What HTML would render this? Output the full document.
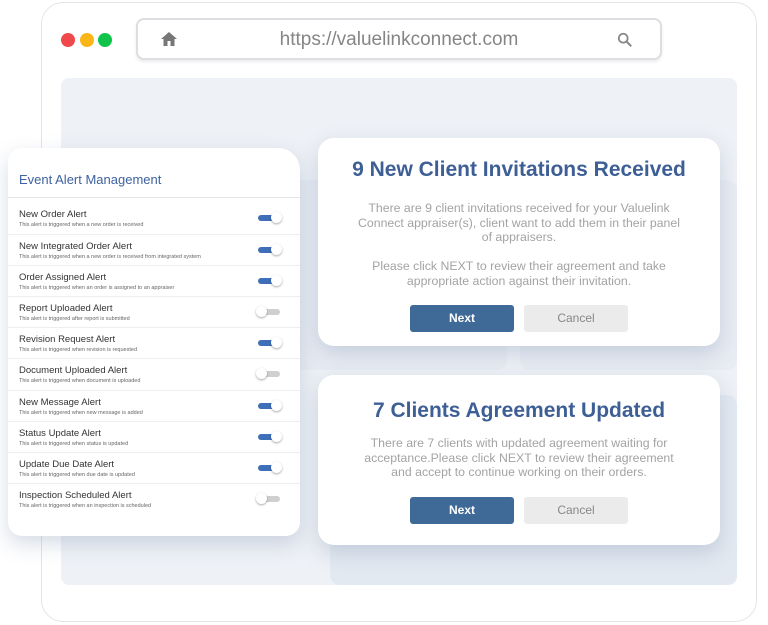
<!DOCTYPE html>
<html><head><style>
*{box-sizing:border-box;margin:0;padding:0}
body{width:768px;height:625px;background:#fff;position:relative;overflow:hidden;font-family:"Liberation Sans",sans-serif}
.abs{position:absolute}
.frame{left:41px;top:2px;width:716px;height:620px;border:1.5px solid #e2e4e8;border-radius:22px;background:#fff}
.dot{width:14px;height:14px;border-radius:50%;top:33px}
.addr{left:136px;top:18px;width:526px;height:42px;border:2px solid #dcdee2;border-radius:8px;box-shadow:0 2px 3px rgba(0,0,0,.08);background:#fff}
.url{left:0;width:100%;top:9px;text-align:center;font-size:19px;color:#858585}
.gray{left:61px;top:78px;width:676px;height:507px;background:#eef1f6;border-radius:8px}
.tile{background:#e6ebf2;border-radius:10px}
.card{background:#fff;border-radius:16px;box-shadow:0 8px 20px rgba(120,140,170,.3)}
.left{left:8px;top:148px;width:292px;height:388px;border-radius:14px 22px 14px 14px}
.lt{left:19px;top:172px;font-size:13px;color:#3d62a0}
.row{left:8px;width:292px;height:31px;border-top:1px solid #eceef1}
.row b{position:absolute;left:11px;top:6px;font-weight:normal;font-size:9.5px;color:#333}
.row i{position:absolute;left:11px;top:19px;font-style:normal;font-size:5.5px;color:#666}
.tg{position:absolute;left:250px;top:12px;width:22px;height:6px;border-radius:3px;background:#3f6fb8}
.tg:after{content:"";position:absolute;top:-3px;right:-2px;width:11px;height:11px;border-radius:50%;background:#fff;box-shadow:0 1px 2px rgba(0,0,0,.35)}
.tg.off{background:#cfcfcf}.tg.off:after{right:auto;left:-2px}
.mt{width:100%;text-align:center;color:#3e5f95;font-size:21px;font-weight:bold}
.mb{width:100%;text-align:center;color:#a3a3a3;font-size:12.3px;line-height:14.5px;padding:0 22px}
.btn{width:104px;height:27px;border-radius:3px;font-size:12px;text-align:center;line-height:27px;font-weight:bold}
.nx{background:#3f6a98;color:#fff}.cn{background:#ebebeb;color:#888}
</style></head><body>
<div class="abs frame"></div>
<div class="abs dot" style="left:61px;background:#f0484b"></div>
<div class="abs dot" style="left:80px;background:#fbb516"></div>
<div class="abs dot" style="left:98px;background:#10c44a"></div>
<div class="abs addr">
<svg class="abs" style="left:22px;top:11px" width="18" height="16" viewBox="0 0 18 16"><path d="M9 1L1 8h2.5v7h4v-5h3v5h4V8H17z" fill="#777"/></svg>
<div class="abs url">https://valuelinkconnect.com</div>
<svg class="abs" style="left:479px;top:12px" width="16" height="16" viewBox="0 0 18 18"><circle cx="7" cy="7" r="5" fill="none" stroke="#888" stroke-width="2"/><path d="M11 11l5 5" stroke="#888" stroke-width="2.3"/></svg>
</div>
<div class="abs gray"></div>
<div class="abs tile" style="left:61px;top:180px;width:446px;height:190px;background:#e8ecf3"></div>
<div class="abs tile" style="left:520px;top:180px;width:217px;height:190px;background:#e8ecf3"></div>
<div class="abs tile" style="left:330px;top:395px;width:407px;height:190px;background:#e3e9f1"></div>

<div class="abs card left"></div>
<div class="abs lt">Event Alert Management</div>
<div class="abs" style="left:8px;top:197px;width:292px;border-top:1px solid #e4e6ea"></div>
<div class="abs row" style="top:203px;border-top:none"><b>New Order Alert</b><i>This alert is triggered when a new order is received</i><span class="tg"></span></div>
<div class="abs row" style="top:234px"><b>New Integrated Order Alert</b><i>This alert is triggered when a new order is received from integrated system</i><span class="tg"></span></div>
<div class="abs row" style="top:265px"><b>Order Assigned Alert</b><i>This alert is triggered when an order is assigned to an appraiser</i><span class="tg"></span></div>
<div class="abs row" style="top:296px"><b>Report Uploaded Alert</b><i>This alert is triggered after report is submitted</i><span class="tg off"></span></div>
<div class="abs row" style="top:327px"><b>Revision Request Alert</b><i>This alert is triggered when revision is requested</i><span class="tg"></span></div>
<div class="abs row" style="top:358px"><b>Document Uploaded Alert</b><i>This alert is triggered when document is uploaded</i><span class="tg off"></span></div>
<div class="abs row" style="top:390px"><b>New Message Alert</b><i>This alert is triggered when new message is added</i><span class="tg"></span></div>
<div class="abs row" style="top:421px"><b>Status Update Alert</b><i>This alert is triggered when status is updated</i><span class="tg"></span></div>
<div class="abs row" style="top:452px"><b>Update Due Date Alert</b><i>This alert is triggered when due date is updated</i><span class="tg"></span></div>
<div class="abs row" style="top:483px"><b>Inspection Scheduled Alert</b><i>This alert is triggered when an inspection is scheduled</i><span class="tg off"></span></div>

<div class="abs card" style="left:318px;top:138px;width:402px;height:208px">
<div class="abs mt" style="top:20px">9 New Client Invitations Received</div>
<div class="abs mb" style="top:63px">There are 9 client invitations received for your Valuelink<br>Connect appraiser(s), client want to add them in their panel<br>of appraisers.<br><br>Please click NEXT to review their agreement and take<br>appropriate action against their invitation.</div>
<div class="abs btn nx" style="left:92px;top:167px">Next</div>
<div class="abs btn cn" style="left:206px;top:167px;font-weight:normal">Cancel</div>
</div>
<div class="abs card" style="left:318px;top:375px;width:402px;height:170px">
<div class="abs mt" style="top:24px">7 Clients Agreement Updated</div>
<div class="abs mb" style="top:61px">There are 7 clients with updated agreement waiting for<br>acceptance.Please click NEXT to review their agreement<br>and accept to continue working on their orders.</div>
<div class="abs btn nx" style="left:92px;top:122px">Next</div>
<div class="abs btn cn" style="left:206px;top:122px;font-weight:normal">Cancel</div>
</div>
</body></html>
